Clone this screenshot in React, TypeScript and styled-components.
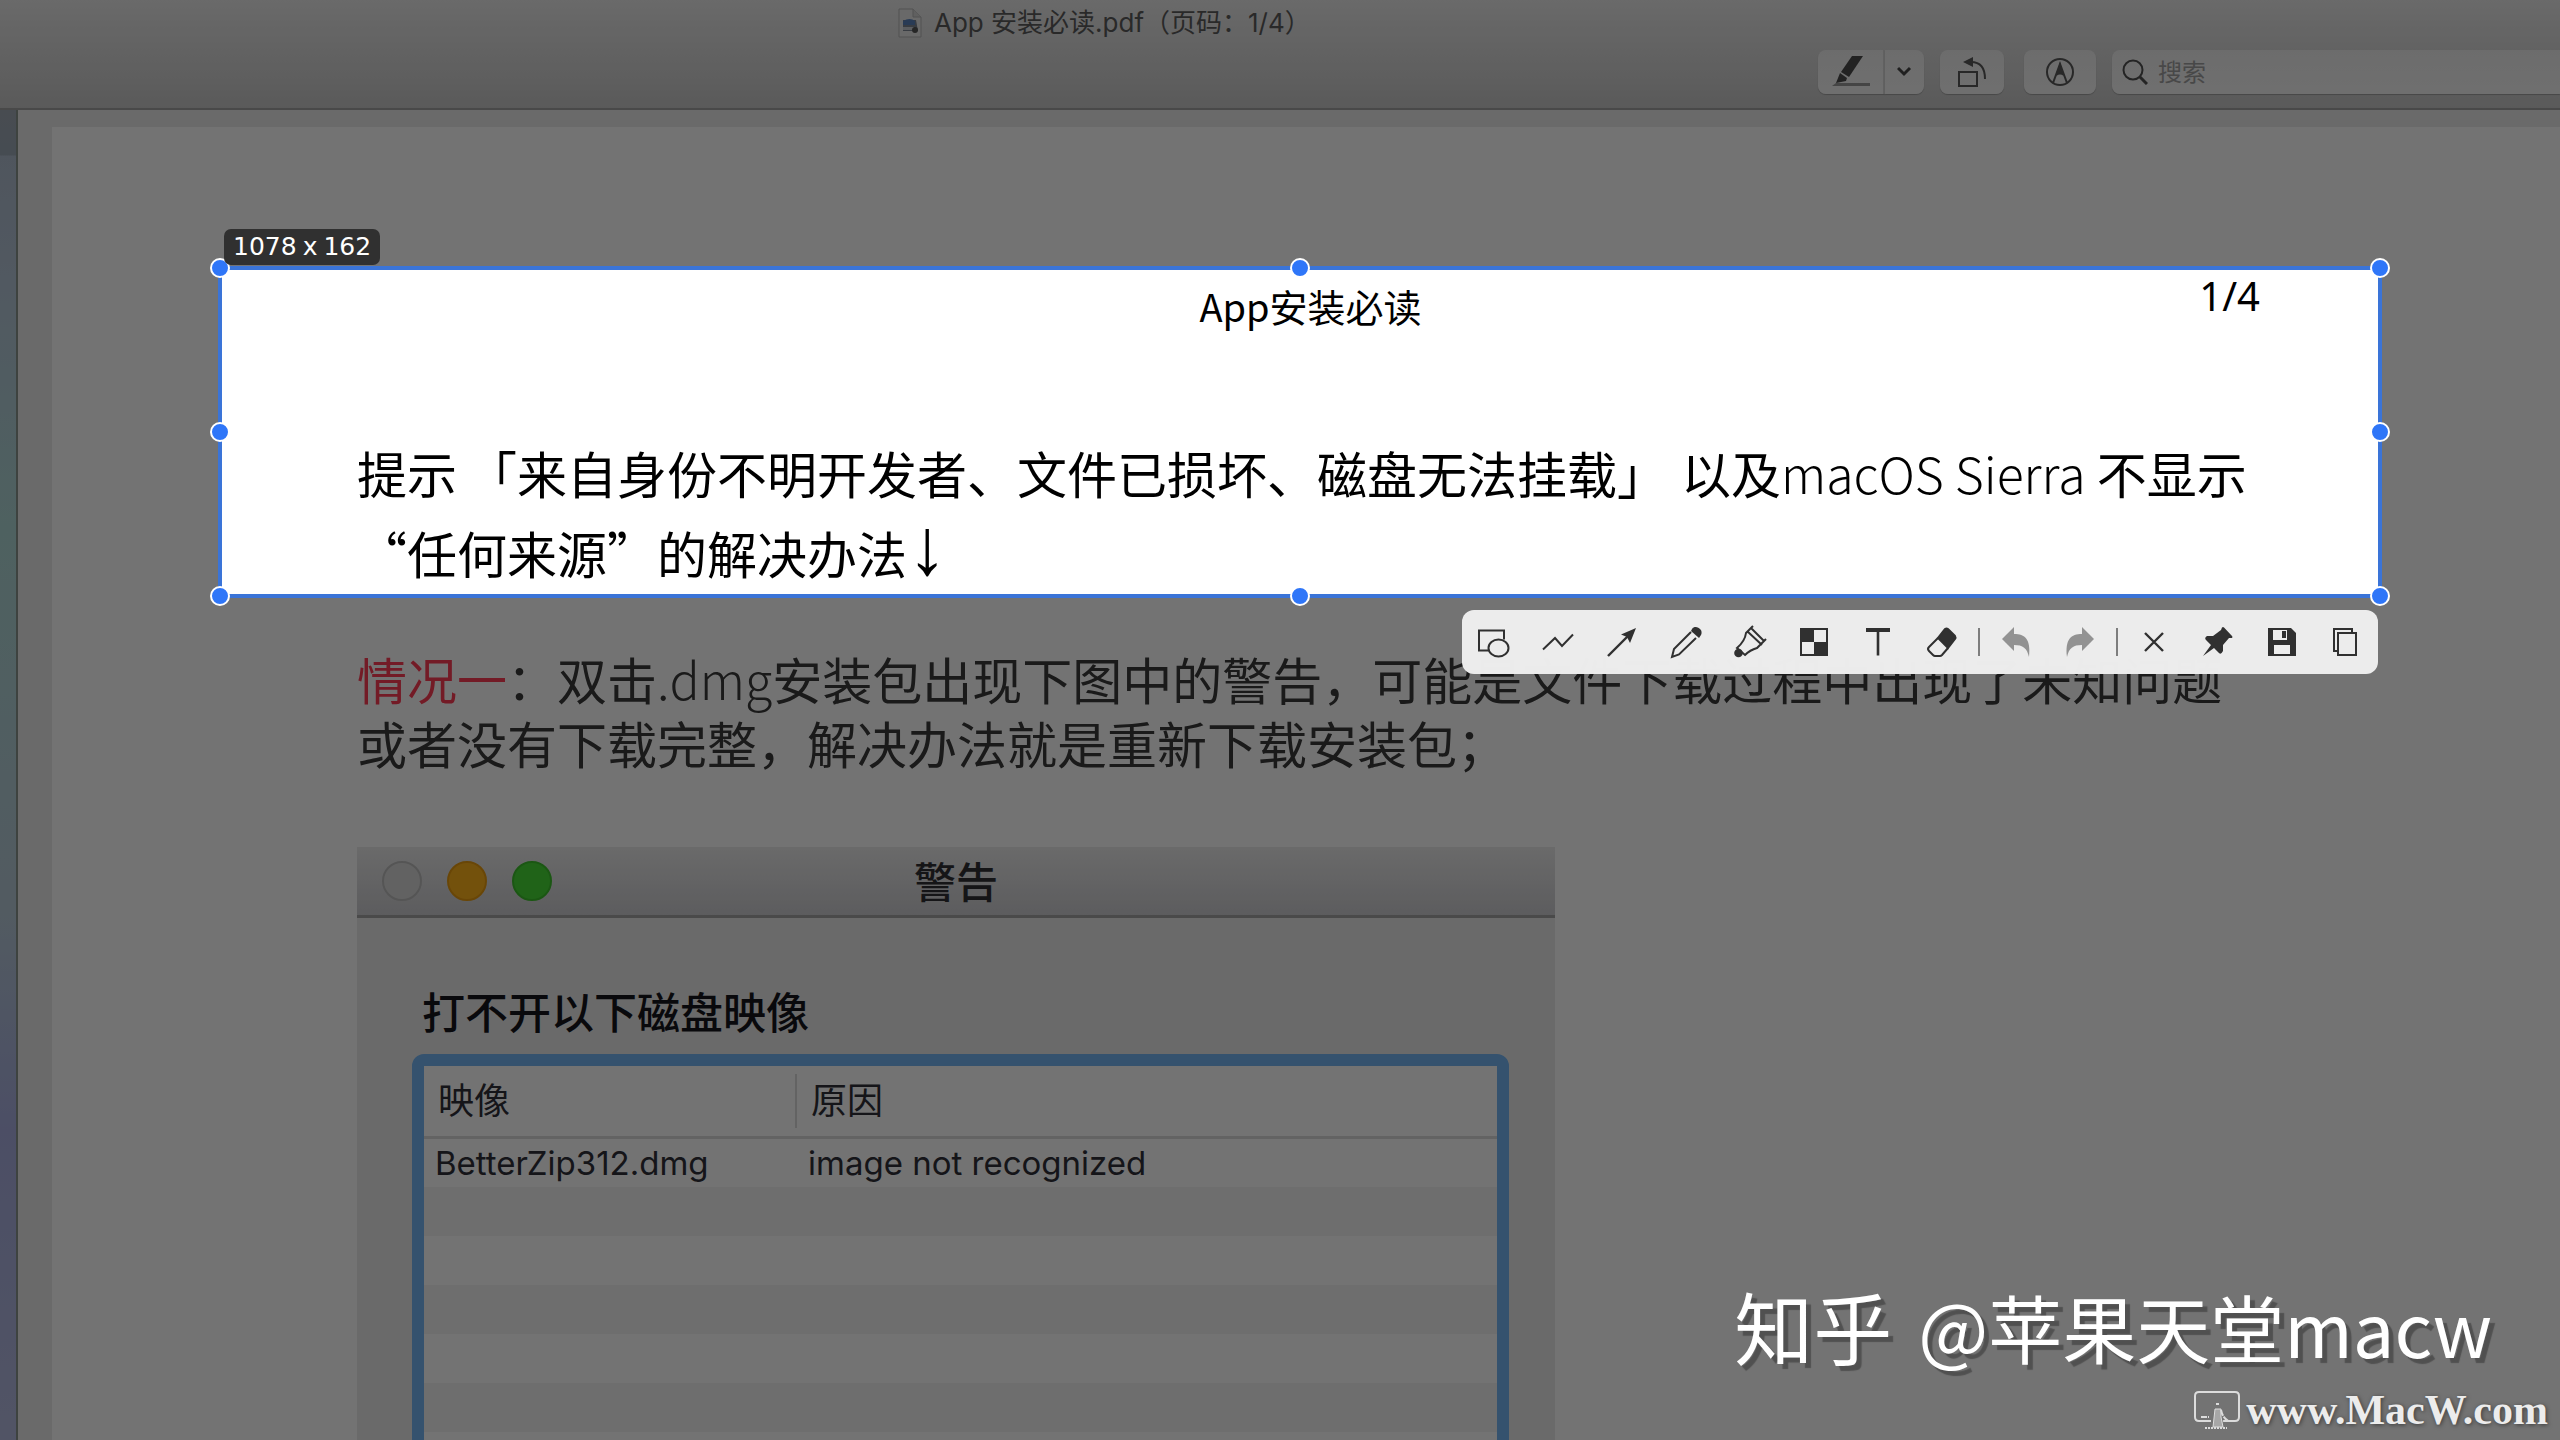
import React from "react";
import styled, { createGlobalStyle } from "styled-components";

const cjk = `"Noto Sans CJK SC", sans-serif`;
const ui = `Inter, "Noto Sans CJK SC", sans-serif`;

const Global = createGlobalStyle`
  *, *::before, *::after { box-sizing: border-box; }
  html, body { margin: 0; padding: 0; overflow: hidden; }
  body { font-family: ${cjk}; background: #ececec; }
  button, input { font: inherit; color: inherit; margin: 0; }
  h1, h2, p { margin: 0; font-weight: 400; }
`;

const Screen = styled.div`
  position: relative;
  display: flex;
  flex-direction: column;
  height: 100vh;
  min-width: 1600px;
  overflow: hidden;
`;

/* ---------- PDF viewer chrome ---------- */

const Chrome = styled.header`
  display: flex;
  flex-direction: column;
  flex: none;
  height: 110px;
  background: linear-gradient(#eaeaea, #c8c8c8);
  border-bottom: 2px solid #a2a2a2;
`;

const TitleRow = styled.div`
  display: flex;
  align-items: center;
  gap: 12px;
  height: 46px;
  padding-left: 898px;
`;

const FileTitle = styled.h1`
  font: 400 26px/36px ${ui};
  color: #5c5c5c;
`;

const ToolRow = styled.div`
  display: flex;
  align-items: center;
  justify-content: flex-end;
  height: 52px;
  padding-left: 1818px;
`;

const ToolButton = styled.button<{ $w: number; $gap?: number; $side?: "left" | "right" }>`
  display: flex;
  align-items: center;
  justify-content: center;
  flex: none;
  width: ${(p) => p.$w}px;
  height: 44px;
  margin-right: ${(p) => p.$gap ?? 0}px;
  padding: 0;
  border: 0;
  border-right: ${(p) => (p.$side === "left" ? "2px solid #d8d8d8" : "0")};
  border-radius: ${(p) => (p.$side === "left" ? "8px 0 0 8px" : p.$side === "right" ? "0 8px 8px 0" : "8px")};
  background: linear-gradient(#f0f0f0, #f6f6f6);
  box-shadow: 0 1px 1px #9f9f9f;
`;

const SearchBox = styled.label`
  display: flex;
  align-items: center;
  gap: 10px;
  flex: 1;
  height: 44px;
  padding-left: 10px;
  border-radius: 8px 0 0 8px;
  background: linear-gradient(#f0f0f0, #f6f6f6);
  box-shadow: 0 1px 1px #9f9f9f;
`;

const SearchInput = styled.input`
  flex: 1;
  min-width: 0;
  height: 36px;
  padding: 0 0 3px;
  border: 0;
  outline: 0;
  background: transparent;
  font-size: 24px;
  &::placeholder { color: #a0a0a0; opacity: 1; }
`;

const Body = styled.div`
  display: flex;
  flex: 1;
  min-height: 0;
`;

const Desktop = styled.div`
  flex: none;
  width: 18px;
  border-right: 2px solid #8b968f;
  background: linear-gradient(#a0a8b4 0, #9ba8b6 45px, #b0bdcf 46px, #b4c6d8 180px, #aed8d6 420px, #b6cad8 800px, #a8aee0 1020px, #b4bbe0 100%);
`;

const Canvas = styled.main`
  flex: 1;
  display: flex;
  min-width: 0;
  padding: 17px 0 0 34px;
  background: #ececec;
`;

const Sheet = styled.article`
  position: relative;
  flex: 1;
  padding: 149px 300px 0 305px;
  background: #fff;
`;

/* ---------- Document ---------- */

const RunningHead = styled.div`
  display: grid;
  grid-template-columns: 1fr auto 1fr;
  height: 156px;
`;

const HeadTitle = styled.span`
  grid-column: 2;
  padding: 2px 0 0 4px;
  font-size: 38px;
  line-height: 56px;
`;

const PageNo = styled.span`
  justify-self: end;
  font: 400 40px/40px "Noto Sans", sans-serif;
`;

const Heading = styled.h2`
  font-size: 50px;
  line-height: 80px;
  white-space: nowrap;
`;

const Bracket = styled.span<{ $open?: boolean }>`
  margin: ${(p) => (p.$open ? "0 0 0 10px" : "0 14px 0 0")};
`;

const Arrow = styled.span`
  font-family: "Liberation Sans", sans-serif;
  font-size: 80px;
  font-weight: 700;
  line-height: 0;
`;

const Para = styled.p`
  margin-top: 54px;
  font-size: 50px;
  line-height: 64px;
  color: #3a3a3a;
  white-space: nowrap;
`;

const Thin = styled.span`
  font-weight: 300;
`;

const Mark = styled.strong`
  font-weight: 400;
  color: #ff3c55;
`;

/* ---------- Warning dialog figure ---------- */

const Dialog = styled.section`
  width: 1198px;
  height: 700px;
  margin-top: 73px;
  background: #ececec;
  color: #16161c;
`;

const DialogBar = styled.div`
  display: grid;
  grid-template-columns: 1fr auto 1fr;
  align-items: center;
  height: 71px;
  padding: 0 25px;
  background: linear-gradient(#ebebeb, #cdcdd1);
  border-bottom: 3px solid #a4a4a4;
`;

const Lights = styled.div`
  display: flex;
  gap: 25px;
`;

const Light = styled.button<{ $c: string; $b: string }>`
  width: 40px;
  height: 40px;
  padding: 0;
  border: 2px solid ${(p) => p.$b};
  border-radius: 50%;
  background: ${(p) => p.$c};
`;

const DialogTitle = styled.span`
  padding-bottom: 2px;
  font-size: 42px;
  line-height: 56px;
  font-weight: 500;
  color: #303034;
`;

const DialogBody = styled.div`
  padding: 60px 46px 0 55px;
`;

const DialogText = styled.p`
  padding-left: 10px;
  font-size: 43px;
  line-height: 64px;
  font-weight: 500;
`;

const Frame = styled.div`
  height: 600px;
  margin-top: 12px;
  border: 12px solid #76b6f4;
  border-radius: 12px;
  background: #fff;
`;

const Table = styled.table`
  width: 100%;
  border-collapse: collapse;
  table-layout: fixed;
  color: #303038;
`;

const Th = styled.th<{ $w?: number }>`
  width: ${(p) => (p.$w ? `${p.$w}px` : "auto")};
  height: 71px;
  padding: 0 0 6px 14px;
  border-bottom: 3px solid #dcdcdc;
  background: ${(p) => (p.$w ? "linear-gradient(#dcdcdc, #dcdcdc) right center / 2px 54px no-repeat" : "none")};
  font-size: 36px;
  line-height: 48px;
  font-weight: 400;
  text-align: left;
`;

const Row = styled.tr`
  height: 49px;
  &:nth-child(even) { background: #f4f4f4; }
`;

const Td = styled.td`
  padding: 0 0 0 11px;
  font: 400 33px/48px ${ui};
`;

/* ---------- Screenshot selection ---------- */

const Selection = styled.div`
  position: absolute;
  top: 139px;
  left: 166px;
  right: 178px;
  height: 332px;
  border: 4px solid #3a74d8;
  box-shadow: 0 0 0 4000px rgba(0, 0, 0, 0.55);
`;

const Handle = styled.i<{ $x: number; $y: number }>`
  position: absolute;
  left: ${(p) => p.$x}%;
  top: ${(p) => p.$y}%;
  width: 20px;
  height: 20px;
  margin: ${(p) => `${p.$y === 0 ? -12 : p.$y === 100 ? -8 : -10}px 0 0 ${p.$x === 0 ? -12 : p.$x === 100 ? -8 : -10}px`};
  border: 2px solid #fff;
  border-radius: 50%;
  background: #2f76f8;
`;

const SizeBadge = styled.div`
  position: absolute;
  left: 2px;
  bottom: calc(100% + 5px);
  display: flex;
  align-items: center;
  gap: 6px;
  height: 36px;
  padding: 0 9px;
  border-radius: 7px;
  background: #303030;
  color: #fff;
  font: 400 25px/36px "DejaVu Sans", sans-serif;
`;

const Toolbar = styled.div`
  position: absolute;
  top: calc(100% + 16px);
  right: 0;
  display: flex;
  align-items: center;
  height: 64px;
  border-radius: 12px;
  background: rgba(238, 238, 238, 0.99);
  color: #303030;
`;

const Tool = styled.button<{ $muted?: boolean }>`
  display: flex;
  align-items: center;
  justify-content: center;
  width: 64px;
  height: 64px;
  padding: 0;
  border: 0;
  background: none;
  color: ${(p) => (p.$muted ? "#929292" : "#303030")};
`;

const Divider = styled.span`
  width: 2px;
  height: 28px;
  margin: 0 4px;
  background: #7d7d7d;
`;

/* ---------- Watermarks ---------- */

const Watermark = styled.div`
  position: absolute;
  right: 68px;
  bottom: 54px;
  display: flex;
  align-items: center;
  gap: 26px;
  color: #fff;
  font-size: 74px;
  line-height: 120px;
  white-space: nowrap;
  text-shadow: 5px 5px 1px rgba(0, 0, 0, 0.3);
`;

const Brand = styled.span`
  font-size: 79px;
`;

const Site = styled.div`
  position: absolute;
  right: 12px;
  bottom: 4px;
  display: flex;
  align-items: center;
  gap: 6px;
  color: #ececec;
  font: 700 42px/52px "Liberation Serif", serif;
  text-shadow: 1px 1px 4px rgba(0, 0, 0, 0.5);
`;

const Svg = ({ size = 36, children }: { size?: number; children: React.ReactNode }) => (
  <svg width={size} height={size} viewBox={`0 0 ${size} ${size}`} fill="none" stroke="currentColor" strokeWidth="2" aria-hidden="true">
    {children}
  </svg>
);

const undoPath = "M4 15 16 3v7c11 0 17 5 15 23-2-9-6-12-15-12v6z";

const tools: { name: string; muted?: boolean; split?: boolean; art: React.ReactNode }[] = [
  { name: "形状", art: <><path d="M12.500 26.500H3V6.500h25v9" /><ellipse cx="22.500" cy="24" rx="10" ry="8.500" /></> },
  { name: "折线", art: <path d="M3 25.500 15 14l7 8L33 10.500" /> },
  { name: "箭头", art: <><path d="M4 32 25 11" strokeWidth="2.400" /><path d="M32 4 26 19l-3-6-6-2.500z" fill="currentColor" stroke="none" /></> },
  { name: "铅笔", art: <><path d="M23 8 6 25 4 33 11 30.500 28 14" /><path d="M24 5c3-5 12 0 9 6l-2 3-8-7z" fill="currentColor" stroke="none" /></> },
  { name: "记号笔", art: <><path d="m21 2-7 7q-1 8-9 15l8 7q5-5 12-7l9-9M15 7l15 14M19 4l13 13" /><circle cx="6.500" cy="29" r="4.300" fill="currentColor" stroke="none" /></> },
  { name: "马赛克", art: <><path d="M5 5h26v26H5z" /><path d="M4 4h14v14H4zM18 18h14v14H18z" fill="currentColor" stroke="none" /></> },
  { name: "文字", art: <><path d="M6 6h24" strokeWidth="4" /><path d="M18 6v25.500" strokeWidth="2.600" /></> },
  { name: "橡皮", split: true, art: <><path d="M14 14 5 23q-2 2 0 4l4 4q1 1 2 1h5q1 0 2-1l6-7" /><path d="m21 5q1.500-1 3 0l7 7q1 1.500 0 3l-7 9-10-10z" fill="currentColor" /></> },
  { name: "撤销", muted: true, art: <path d={undoPath} fill="currentColor" stroke="none" /> },
  { name: "重做", muted: true, split: true, art: <path d={undoPath} transform="matrix(-1 0 0 1 36 0)" fill="currentColor" stroke="none" /> },
  { name: "关闭", art: <path d="m9 9 18 18M27 9 9 27" strokeWidth="2.400" /> },
  { name: "贴图", art: <path d="M22 3.500q1-1 2 0l8 8.500q1 1 0 2h-3l-6 7v6q-2 4-4 2l-5-5L3 32l8-11-5-5q-2-2 1-4h6l8-6z" fill="currentColor" stroke="none" /> },
  { name: "保存", art: <><path d="M4 4h23l5 5v23H4z" fill="currentColor" stroke="none" /><path d="M9 6h14v10H9zM10 21h16v9H10z" fill="#eee" stroke="none" /><path d="M18 7h4v7h-4z" fill="currentColor" stroke="none" /></> },
  { name: "复制", art: <><path d="M10 9h18v22H10z" /><path d="M9 27H6V5h18v4" /></> },
];

const handles = [[0, 0], [50, 0], [100, 0], [0, 50], [100, 50], [0, 100], [50, 100], [100, 100]];

const FileIcon = () => (
  <svg width="24" height="30" viewBox="0 0 24 30" aria-hidden="true">
    <path d="M1 1h14l8 8v20H1z" fill="#e9e9e9" stroke="#b5b5b5" />
    <path d="M15 1v8h8" fill="#d6d6d6" stroke="#b5b5b5" />
    <path d="M5 12h13l2 11H5z" fill="#7d8592" />
    <path d="M5 13q7-4 12 0v4H5z" fill="#5b84bd" />
    <path d="M5 19h11v3H5z" fill="#c9ced6" />
    <circle cx="17" cy="22" r="3" fill="#555" />
  </svg>
);

export default function App() {
  return (
    <Screen>
      <Global />
      <Chrome>
        <TitleRow>
          <FileIcon />
          <FileTitle>App 安装必读.pdf（页码：1/4）</FileTitle>
        </TitleRow>
        <ToolRow>
          <ToolButton $w={67} $side="left" aria-label="高亮">
            <svg width="38" height="32" viewBox="0 0 38 32" aria-hidden="true">
              <path d="M20 0h11L17 21l-8-5z" fill="#4c4c4c" />
              <path d="m8 17 7 5-1 3-10 2z" fill="#4c4c4c" />
              <path d="M4 27h34v3H0z" fill="#9a9a9a" />
            </svg>
          </ToolButton>
          <ToolButton $w={39} $gap={16} $side="right" aria-label="高亮选项">
            <svg width="16" height="12" viewBox="0 0 16 12" fill="none" stroke="#484848" strokeWidth="3" aria-hidden="true">
              <path d="m1 2 6 6 6-6" />
            </svg>
          </ToolButton>
          <ToolButton $w={64} $gap={20} aria-label="旋转">
            <svg width="30" height="32" viewBox="0 0 30 32" fill="none" stroke="#5a5a5a" strokeWidth="2" aria-hidden="true">
              <path d="M2 16h18v14H2zM14 6c9 0 14 5 14 17" />
              <path d="M16 1v10L6 6z" fill="#5a5a5a" stroke="none" />
            </svg>
          </ToolButton>
          <ToolButton $w={72} $gap={16} aria-label="标记">
            <svg width="30" height="30" viewBox="0 0 30 30" fill="none" stroke="#5a5a5a" strokeWidth="2" aria-hidden="true">
              <circle cx="15" cy="15" r="13" />
              <path d="M8 26 15 7l7 19M11 18q4-3 8 0" />
              <path d="m15 5 4 13q-4-3-8 0z" fill="#5a5a5a" stroke="none" />
            </svg>
          </ToolButton>
          <SearchBox>
            <svg width="26" height="26" viewBox="0 0 26 26" fill="none" stroke="#505050" strokeWidth="2" aria-hidden="true">
              <circle cx="11" cy="11" r="9.500" />
              <path d="m18 18 7 7" strokeWidth="3" />
            </svg>
            <SearchInput type="search" placeholder="搜索" aria-label="搜索" />
          </SearchBox>
        </ToolRow>
      </Chrome>

      <Body>
        <Desktop />
        <Canvas>
          <Sheet lang="zh-CN">
            <RunningHead>
              <HeadTitle>App安装必读</HeadTitle>
              <PageNo>1/4</PageNo>
            </RunningHead>
            <Heading>
              提示<Bracket $open>「</Bracket>来自身份不明开发者、文件已损坏、磁盘无法挂载<Bracket>」</Bracket>以及<Thin>macOS Sierra </Thin>不显示
              <br />
              “任何来源”的解决办法<Arrow>↓</Arrow>
            </Heading>
            <Para>
              <Mark>情况一</Mark>：双击<Thin>.dmg</Thin>安装包出现下图中的警告，可能是文件下载过程中出现了未知问题
              <br />
              或者没有下载完整，解决办法就是重新下载安装包；
            </Para>
            <Dialog>
              <DialogBar>
                <Lights>
                  <Light $c="#dadada" $b="#bcbcbc" aria-label="关闭窗口" />
                  <Light $c="#ffb31c" $b="#e89c10" aria-label="最小化" />
                  <Light $c="#48dc36" $b="#3cc02c" aria-label="缩放" />
                </Lights>
                <DialogTitle>警告</DialogTitle>
              </DialogBar>
              <DialogBody>
                <DialogText>打不开以下磁盘映像</DialogText>
                <Frame>
                  <Table>
                    <thead>
                      <tr>
                        <Th $w={373}>映像</Th>
                        <Th>原因</Th>
                      </tr>
                    </thead>
                    <tbody>
                      <Row>
                        <Td>BetterZip312.dmg</Td>
                        <Td>image not recognized</Td>
                      </Row>
                      {[0, 1, 2, 3, 4, 5].map((n) => (
                        <Row key={n}>
                          <Td />
                          <Td />
                        </Row>
                      ))}
                    </tbody>
                  </Table>
                </Frame>
              </DialogBody>
            </Dialog>

            <Selection>
              {handles.map(([x, y]) => (
                <Handle key={`${x}-${y}`} $x={x} $y={y} />
              ))}
              <SizeBadge>
                <span>1078</span>
                <span>x</span>
                <span>162</span>
              </SizeBadge>
              <Toolbar role="toolbar">
                {tools.map((t) => (
                  <React.Fragment key={t.name}>
                    <Tool $muted={t.muted} aria-label={t.name}>
                      <Svg>{t.art}</Svg>
                    </Tool>
                    {t.split && <Divider />}
                  </React.Fragment>
                ))}
              </Toolbar>
            </Selection>
          </Sheet>
        </Canvas>
      </Body>

      <Watermark>
        <Brand>知乎</Brand>
        <span>@苹果天堂macw</span>
      </Watermark>
      <Site>
        <svg width="46" height="38" viewBox="0 0 46 38" fill="none" stroke="#dcdcdc" strokeWidth="2" aria-hidden="true">
          <path d="M17 30H5c-3 0-4-1-4-4V5c0-3 1-4 4-4h36c3 0 4 1 4 4v21c0 3-1 4-4 4h-8" />
          <path d="M11 37h22" strokeDasharray="2 1" />
          <path d="M19 36l1-9 1-9h6v8l2 10z" fill="#dcdcdc" fillOpacity=".5" strokeWidth="1" />
          <path d="M27 19q2 9 8 11h-7M22 13h3M7 26h8" strokeDasharray="6 1" />
        </svg>
        www.MacW.com
      </Site>
    </Screen>
  );
}
